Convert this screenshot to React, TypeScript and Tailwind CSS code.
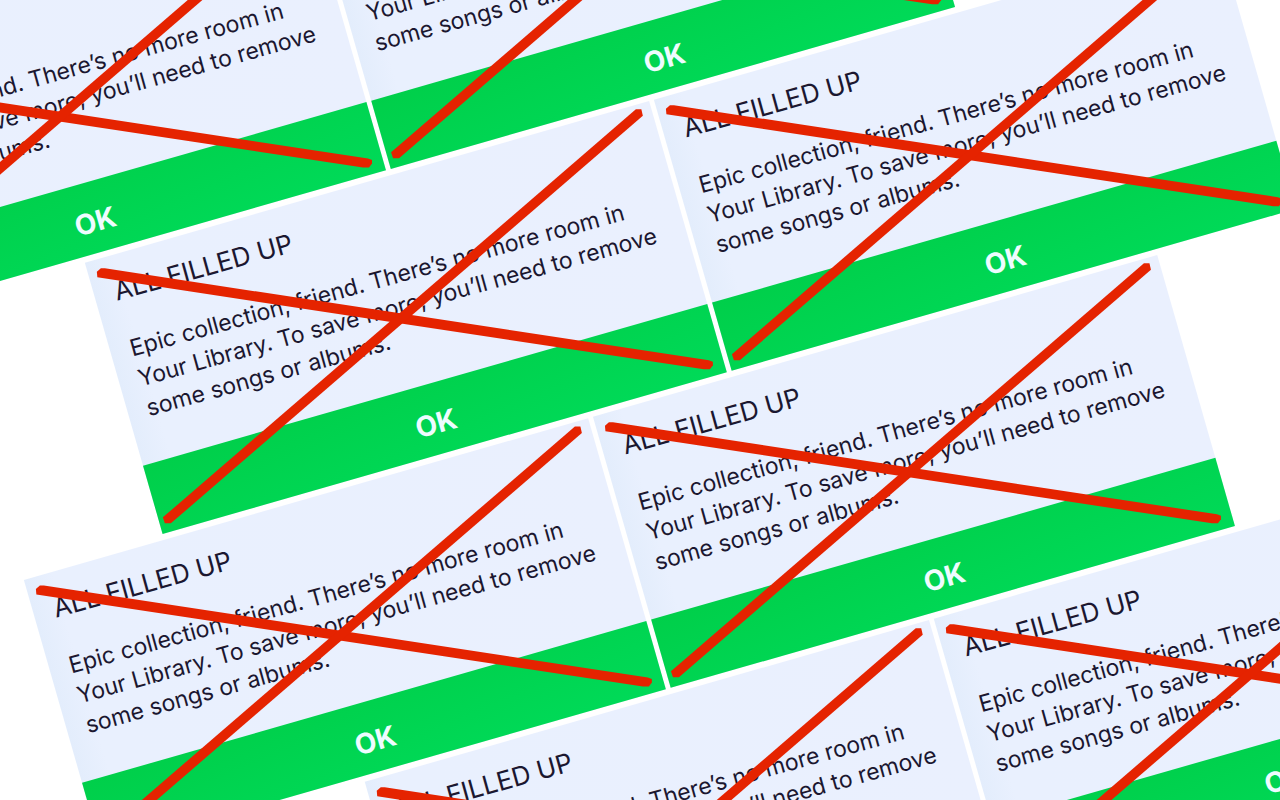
import React from 'react';

const rows = [
  { id: 'first', shift: 'ml-0' },
  { id: 'second', shift: 'ml-[272px]' },
  { id: 'third', shift: 'ml-[126px]' },
  { id: 'fourth', shift: 'ml-[398px]' },
];

function Cross() {
  return (
    <svg
      aria-hidden="true"
      className="absolute top-0 left-0 w-full h-full overflow-visible pointer-events-none"
      fill="#e52300"
    >
      {/* strokes are drawn level with the page, so undo the tilt of the wall */}
      <g transform="rotate(16)">
        <path d="M12 9 L16 5.5 L20 5.5 L624 97.5 L628 99 L628 102.5 L625 106.5 L619 106.5 L12.5 14.5 Z" />
        <path d="M78 254.5 L80 260.5 L86 260.5 L558 -147 L556.5 -153.5 L551 -153.5 Z" />
      </g>
    </svg>
  );
}

function Notice() {
  return (
    <article className="relative w-[587px] shrink-0 bg-gradient-to-r from-[#e3edfc] via-[#e9f0fe] via-5% to-[#eaf0fe] text-[#1b1730]">
      <div className="px-5 pt-5 pb-[38px] rotate-[0.5deg] origin-left">
        <h2 className="text-[26px] leading-8 font-normal">ALL FILLED UP</h2>
        <p className="mt-7 text-[23px] leading-[31px] font-normal whitespace-nowrap">
          Epic collection, friend. There’s no more room in
          <br />
          Your Library. To save more, you’ll need to remove
          <br />
          some songs or albums.
        </p>
      </div>
      <button
        type="button"
        className="block w-full pt-2 h-[71px] bg-gradient-to-br from-[#00cf4a] to-[#00da58] text-[28px] leading-8 font-bold text-[#eefcff] text-center"
      >
        OK
      </button>
      <Cross />
    </article>
  );
}

export default function App() {
  return (
    <main className="relative h-screen overflow-hidden bg-white font-['Inter',sans-serif]">
      <div className="absolute left-[-256px] top-[61px] flex flex-col gap-[6px] origin-top-left -rotate-16">
        {rows.map((row) => (
          <div key={row.id} className={`flex gap-[5px] ${row.shift}`}>
            <Notice />
            <Notice />
          </div>
        ))}
      </div>
    </main>
  );
}
